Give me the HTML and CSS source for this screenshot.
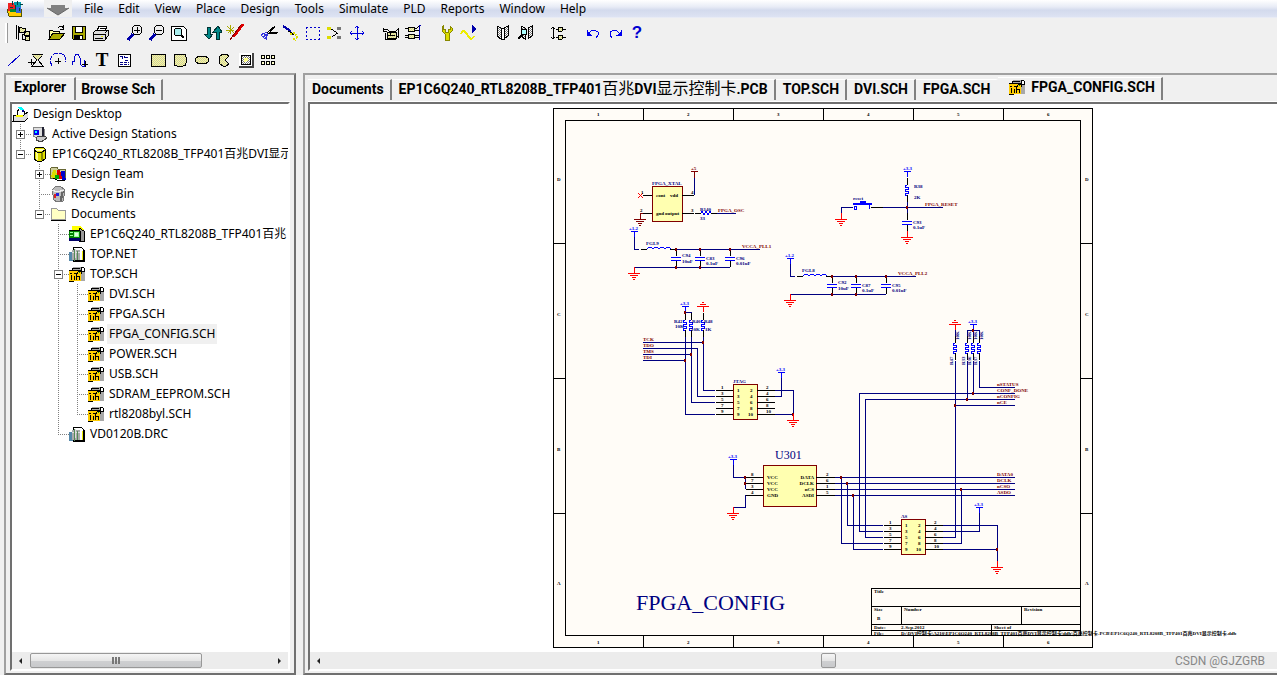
FILE: index.html
```html
<!DOCTYPE html>
<html lang="en">
<head>
<meta charset="utf-8">
<title>Design Explorer - FPGA_CONFIG.SCH</title>
<link rel="stylesheet" href="styles.css">
</head>
<body>
<svg class="defs" aria-hidden="true">
  <defs>
    <pattern id="yl" width="2" height="2" patternUnits="userSpaceOnUse"><rect width="2" height="2" fill="#ffff90"/><path d="M0 0h1v1H0zM1 1h1v1H1z" fill="#c8c8b0"/></pattern>
    <pattern id="gr" width="2" height="2" patternUnits="userSpaceOnUse"><rect width="2" height="2" fill="#fff"/><path d="M0 0h1v1H0zM1 1h1v1H1z" fill="#777"/></pattern>
    <symbol id="i-sch" viewBox="0 0 16 16"><path d="M4 1h8l4 4v10H4z" fill="#a8a8a8"/><path d="M12 1h2l1 1v3h-3z" fill="#fff" stroke="#000"/><path d="M0 4h12v11H0z" fill="#fc0"/><path d="M3 2h8M3 2v3M0 4h12M1 7h2M5 7h2v2M2 9v5M5 10v4M7 14V9l3-4h2v3M8 10h3M10 11v3M0 15h5" stroke="#000" fill="none"/><path d="M10 6h1v1h-1z" fill="#0a0"/></symbol>
    <symbol id="i-net" viewBox="0 0 16 16"><path d="M4 1h8l3 3v11H4z" fill="#fff" stroke="#000"/><path d="M15 4v11H4" stroke="#000" stroke-width="2" fill="none"/><path d="M0 6h4v9H0z" fill="#58a"/><path d="M3 4h8v10H3z" fill="#aaa"/><path d="M3 6h8M6 3v9" stroke="#ddd"/><path d="M5 3v12M8 5v9" stroke="#585"/><path d="M13 5v9" stroke="#ee0"/></symbol>
    <symbol id="i-pcb" viewBox="0 0 16 16"><path d="M3 0h8l4 4v11H3z" fill="#ff0"/><path d="M10 2l5 3v10h-5z" fill="#999" stroke="#000"/><path d="M0 4h11v9H0z" fill="#008000"/><path d="M1 6h3M1 9h3M5 6h4v4H5z" stroke="#9f9" fill="#dfd"/><path d="M0 12h12v3H0z" fill="#006"/><path d="M0 4h11M11 5v10" stroke="#000"/></symbol>
    <symbol id="i-desk" viewBox="0 0 16 16"><path d="M1 9h11l4-3v6l-3 3H1z" fill="#ddd" stroke="#000"/><path d="M5 6l3-4 5 4-1 3H5z" fill="#fff" stroke="#000"/><path d="M5 1h4l3 3H8z" fill="#0ff"/><path d="M4 9h7v2H4z" fill="#ff0"/><path d="M0 15h13l3-3" stroke="#000" fill="none"/><path d="M10 4h2v2h-2z" fill="#008"/></symbol>
    <symbol id="i-station" viewBox="0 0 16 16"><path d="M2 1h7l4 2v9H6l-4-2z" fill="#ddd" stroke="#888"/><path d="M3 4h5v5H3z" fill="#00e"/><path d="M4 5h2v2H4z" fill="#0ff"/><path d="M11 1h2v9h-2z" fill="#223"/><path d="M6 11l8-1 2 2-6 4-5-2z" fill="#ccc" stroke="#444"/></symbol>
    <symbol id="i-db" viewBox="0 0 16 16"><path d="M3 3v10l3 2h5l3-2V3l-2-2H5z" fill="#dd0" stroke="#000"/><path d="M4 3h9v2H4z" fill="#ffffb0"/><path d="M5 6v8M6 6v8" stroke="#ff8"/><path d="M11 6v8" stroke="#880" stroke-width="2"/><path d="M3 4l3 2h5l3-2" fill="none" stroke="#000"/></symbol>
    <symbol id="i-team" viewBox="0 0 16 16"><path d="M0 3l2-2h5l1 2h7v9H0z" fill="#cc9" stroke="#663"/><path d="M3 4h3v3h2v6H3l-2-2z" fill="#dd0"/><path d="M7 4h3l1 4 2 5H7z" fill="#d00"/><path d="M11 5h4v4l1 5h-4z" fill="#00c"/><path d="M5 9h4v4H5z" fill="#0a0"/><path d="M3 12l4 2 8 1" stroke="#000" fill="none"/></symbol>
    <symbol id="i-bin" viewBox="0 0 16 16"><path d="M2 4l3-3 5-1 4 3 1 2-2 10-6 1-3-2z" fill="#bbb" stroke="#777"/><path d="M2 4l5 2 7-2" stroke="#eee" fill="none"/><path d="M11 6l3-1-2 10h-2z" fill="#666"/><path d="M4 8h2v4H4z" fill="#d22"/><path d="M6 7h3v3H6z" fill="#22d"/></symbol>
    <symbol id="i-folder" viewBox="0 0 16 16"><path d="M1 4l1-2h4l2 2h7v9H1z" fill="#ffffc4" stroke="#999"/><path d="M1 14h15V5" stroke="#000" fill="none"/></symbol>
  </defs>
</svg>
<div class="app">
  <nav class="menubar" aria-label="Main menu">
    <svg class="logo" viewBox="0 0 16 16" shape-rendering="crispEdges"><path d="M0 8h14v7H2z" fill="#fc0" stroke="#550"/><path d="M1 2h7v8H1z" fill="#e22"/><path d="M7 1h7v6H8z" fill="#09a"/><path d="M3 8h6v3H3z" fill="#083"/><path d="M9 6h5v6H9z" fill="#36d"/><path d="M5 0v4M10 0v4M13 3h3M3 6h3M8 4v5M12 7v3" stroke="#044"/></svg>
    <button class="dropmark" aria-label="Design menu"><svg viewBox="0 0 24 12"><path d="M5 1h14v3h4l-11 7-11-7h4z" fill="#808080"/><path d="M1 4l11 7 11-7" stroke="#666" fill="none"/></svg></button>
    <button>File</button><button>Edit</button><button>View</button><button>Place</button><button>Design</button><button>Tools</button><button>Simulate</button><button>PLD</button><button>Reports</button><button>Window</button><button>Help</button>
  </nav>
  <div class="toolbar main-tools" role="toolbar" aria-label="Main tools">
    <div class="group"><button aria-label="Explorer"><svg viewBox="0 0 18 18"><path d="M2 1v14M4 2v14M4 6h2M8 10v5h3M8 10h2" stroke="#000"/><path d="M5 3h2l1 1h3v4H5zM10 7h5v4h-5zM11 12h4v4h-4z" fill="url(#yl)" stroke="#000"/></svg></button></div>
    <div class="group">
      <button aria-label="Open"><svg viewBox="0 0 18 18"><path d="M1 15V6h3l1 1h6v2" fill="#ffffa0" stroke="#000"/><path d="M1 15l4-6h12l-5 6z" fill="#aa0" stroke="#000"/><path d="M10 4c2-3 4-2 5 0M15 1v4h-3" stroke="#000"/></svg></button>
      <button aria-label="Save"><svg viewBox="0 0 18 18"><path d="M2 2h13v13H3l-1-1z" fill="#aa0" stroke="#000"/><path d="M5 2h7v6H5z" fill="#fff" stroke="#000"/><path d="M4 11h9v4H4z" fill="#000"/><path d="M10 12h2v3h-2z" fill="#fff"/></svg></button>
      <button aria-label="Print"><svg viewBox="0 0 18 18"><path d="M5 7l2-5h8l-2 5" fill="#fff" stroke="#000"/><path d="M1 9l3-3h12v6l-3 4H1z" fill="#ddd" stroke="#000"/><path d="M1 10h12v6M13 9l3-3M8 4h5M7 6h5M3 14h8" stroke="#000"/><path d="M9 12h2v1H9z" fill="#dd0"/></svg></button>
    </div>
    <div class="group">
      <button aria-label="Zoom in"><svg viewBox="0 0 18 18"><circle cx="11" cy="6" r="5" fill="#eee" stroke="#000"/><path d="M8 6h6M11 3v6" stroke="#000"/><path d="M7 10l-5 6" stroke="#00a" stroke-width="3"/></svg></button>
      <button aria-label="Zoom out"><svg viewBox="0 0 18 18"><circle cx="11" cy="6" r="5" fill="#eee" stroke="#000"/><path d="M8 6h6" stroke="#000"/><path d="M7 10l-5 6" stroke="#00a" stroke-width="3"/></svg></button>
      <button aria-label="Fit document"><svg viewBox="0 0 18 18"><path d="M1 2h12l3 3v11H1z" fill="#fff" stroke="#000"/><circle cx="8" cy="8" r="4" fill="#aee" stroke="#000"/><path d="M11 11l3 3" stroke="#000" stroke-width="2"/></svg></button>
    </div>
    <div class="group">
      <button aria-label="Up or down hierarchy"><svg viewBox="0 0 18 18"><path d="M3 3h3v7h3l-4 5-5-5h3zM12 15h3V8h3l-4-6-5 6h3z" fill="#088" stroke="#033"/></svg></button>
      <button aria-label="Cross probe"><svg viewBox="0 0 18 18"><path d="M17 0L7 13" stroke="#d00" stroke-width="3"/><path d="M15 1L6 13l-2 3" stroke="#800"/><path d="M1 2l7 7M4 1v9M0 6h8M8 3l-6 6" stroke="#aa0"/></svg></button>
    </div>
    <div class="group">
      <button aria-label="Cut"><svg viewBox="0 0 18 18"><path d="M15 2L7 9M15 3L8 10M9 8h9M8 9h9" stroke="#000"/><path d="M7 8l-6 3 4 4 3-6M2 9l6 3M3 13l3-2v5" stroke="#33d" fill="none"/></svg></button>
      <button aria-label="Paste"><svg viewBox="0 0 18 18"><path d="M1 2l6 4 3 4" stroke="#00a" stroke-width="2"/><path d="M6 7l6 3-2 1" stroke="#000"/><path d="M8 10l5-1 2 4-3 2 2 2" stroke="#dd0" stroke-width="2" stroke-dasharray="2 1"/></svg></button>
      <button aria-label="Select area"><svg viewBox="0 0 18 18"><path d="M2 3h13v12H2z" stroke="#00c" stroke-dasharray="2 2"/></svg></button>
      <button aria-label="Deselect"><svg viewBox="0 0 18 18"><path d="M5 5l7 4-7 4" stroke="#000" stroke-dasharray="3 1"/><path d="M1 3h4v3H1zM1 12h4v3H1z" fill="#dd0"/><path d="M11 3h4v3h-4zM11 12h4v3h-4z" fill="#777"/></svg></button>
      <button aria-label="Move"><svg viewBox="0 0 18 18"><path d="M9 2v14M2 9h14M7 4l2-2 2 2M7 14l2 2 2-2M4 7L2 9l2 2M14 7l2 2-2 2" stroke="#00d"/></svg></button>
    </div>
    <div class="group">
      <button aria-label="Wiring"><svg viewBox="0 0 18 18"><path d="M5 8h9v6H5z" fill="url(#yl)" stroke="#000"/><path d="M2 5h3l2 2h7l2-2v8l-2-2M1 4v3h4M3 9v6h11M5 11h8M8 8v3" stroke="#000"/></svg></button>
      <button aria-label="Part browser"><svg viewBox="0 0 18 18"><path d="M4 3h6v4H4zM4 10h6v4H4z" fill="url(#yl)" stroke="#000"/><path d="M1 4h3M1 11h3M10 4h3l2-2M10 11h5M1 13h3M10 13h5M10 6h5" stroke="#000"/><path d="M15 2v14M15 2l2-1" stroke="#00a"/></svg></button>
    </div>
    <div class="group">
      <button aria-label="Electrical rules"><svg viewBox="0 0 18 18"><path d="M5 2v3h2v3h3V5h2V2l2 2v3l-3 3v6H7v-6L4 7V3z" fill="#dd0" stroke="#880"/></svg></button>
      <button aria-label="Simulate"><svg viewBox="0 0 18 18"><path d="M1 10c2-5 4-3 6 0s4 8 7 2" stroke="#ee0" stroke-width="2"/><path d="M12 1l5 4-5 4z" fill="#00a"/></svg></button>
    </div>
    <div class="group">
      <button aria-label="Place part"><svg viewBox="0 0 18 18"><path d="M3 2l4 2v11l-4-3zM14 2l-4 2v11l4-3z" fill="url(#gr)" stroke="#000"/><path d="M7 4h3v11H7z" fill="#fff" stroke="#000"/></svg></button>
      <button aria-label="Find part"><svg viewBox="0 0 18 18"><path d="M5 2l4 2v11l-4-3zM16 2l-4 2v11l4-3z" fill="url(#gr)" stroke="#000"/><circle cx="8" cy="8" r="3" fill="#aff" stroke="#000"/><path d="M6 11l-4 4" stroke="#000" stroke-width="2"/></svg></button>
    </div>
    <div class="group"><button aria-label="Annotate"><svg viewBox="0 0 18 18"><path d="M3 3v12M1 5l2-2 2 2M1 13l2 2 2-2M6 5h3M6 13h3M13 5h3M13 13h3" stroke="#000"/><path d="M8 3h4l1 2-1 2H8zM8 11h4l1 2-1 2H8z" fill="url(#yl)" stroke="#000"/></svg></button></div>
    <div class="group">
      <button aria-label="Undo"><svg viewBox="0 0 18 18"><path d="M3 6v5h5M3 11l4-4 3-1 4 2v3l-2 3" stroke="#00e"/><path d="M3 7l4 4H3z" fill="#00e"/></svg></button>
      <button aria-label="Redo"><svg viewBox="0 0 18 18"><path d="M15 6v5h-5M15 11l-4-4-3-1-4 2v3l2 3" stroke="#00e"/><path d="M15 7l-4 4h4z" fill="#00e"/></svg></button>
      <button class="help" aria-label="Help">?</button>
    </div>
  </div>
  <div class="toolbar draw-tools" role="toolbar" aria-label="Drawing tools">
    <div class="group">
      <button aria-label="Line"><svg viewBox="0 0 18 18"><path d="M3 15L15 4" stroke="#00c"/></svg></button>
      <button aria-label="Polygon"><svg viewBox="0 0 18 18"><path d="M5 3h11l-5 6 5 6H5l5-6z" fill="#f0f0f0" stroke="#000"/><path d="M6 4h9l-4 5h-1z" fill="url(#yl)"/><path d="M1 11h6M4 8v6" stroke="#000"/></svg></button>
      <button aria-label="Arc"><svg viewBox="0 0 18 18"><path d="M3 15C-1 7 4 2 9 2s9 4 7 9" stroke="#00c" stroke-dasharray="5 1"/><path d="M9 7v6M6 10h6" stroke="#000"/></svg></button>
      <button aria-label="Curve"><svg viewBox="0 0 18 18"><path d="M1 14V10h2V7l2-4h2l2 4v6l2 2h2V9" stroke="#00c"/><path d="M14 10v6M11 13h6" stroke="#000"/></svg></button>
      <button class="text-tool" aria-label="Text">T</button>
      <button aria-label="Text frame"><svg viewBox="0 0 18 18"><path d="M3 3h12v12H3z" fill="#fff" stroke="#000"/><path d="M5 5h4v2M7 5v4M10 6h4M10 9h4M5 11h9M5 13h9" stroke="#008" stroke-dasharray="3 1"/></svg></button>
    </div>
    <div class="group">
      <button aria-label="Rectangle"><svg viewBox="0 0 18 18"><path d="M2 3h14v12H2z" fill="url(#yl)" stroke="#000"/></svg></button>
      <button aria-label="Rounded rectangle"><svg viewBox="0 0 18 18"><rect x="3" y="3" width="12" height="12" rx="3" fill="url(#yl)" stroke="#000"/></svg></button>
      <button aria-label="Ellipse"><svg viewBox="0 0 18 18"><ellipse cx="9" cy="9" rx="7" ry="4" fill="url(#yl)" stroke="#000"/></svg></button>
      <button aria-label="Pie"><svg viewBox="0 0 18 18"><path d="M14 5l-3-2H8L5 5 4 9l1 4 3 2h3l3-2-4-4z" fill="url(#yl)" stroke="#000"/></svg></button>
      <button aria-label="Picture"><svg viewBox="0 0 18 18"><path d="M2 2h14v14H2z" fill="#fff"/><path d="M16 2v14H2" stroke="#444" stroke-width="2"/><path d="M4 4h9v9H4z" fill="url(#gr)" stroke="#000"/><path d="M7 7h4v3H9v1H7z" fill="#ff8"/></svg></button>
      <button aria-label="Array"><svg viewBox="0 0 18 18"><path d="M2 4h3v3H2zM7 4h3v3H7zM12 4h3v3h-3zM2 10h3v3H2zM7 10h3v3H7zM12 10h3v3h-3z" fill="#ffc" stroke="#000"/></svg></button>
    </div>
  </div>
  <main class="workspace">
    <section class="panel explorer">
      <div class="tabs" role="tablist"><button class="tab active" role="tab" aria-selected="true">Explorer</button><button class="tab" role="tab">Browse Sch</button></div>
      <div class="well">
        <div class="tree">
          <div class="row root"><svg><use href="#i-desk"/></svg><span>Design Desktop</span></div>
          <ul>
            <li><div class="row"><button class="exp plus" aria-label="Expand"></button><svg><use href="#i-station"/></svg><span>Active Design Stations</span></div></li>
            <li><div class="row"><button class="exp" aria-label="Collapse"></button><svg><use href="#i-db"/></svg><span>EP1C6Q240_RTL8208B_TFP401百兆DVI显示</span></div>
              <ul>
                <li><div class="row"><button class="exp plus" aria-label="Expand"></button><svg><use href="#i-team"/></svg><span>Design Team</span></div></li>
                <li><div class="row"><svg><use href="#i-bin"/></svg><span>Recycle Bin</span></div></li>
                <li><div class="row"><button class="exp" aria-label="Collapse"></button><svg><use href="#i-folder"/></svg><span>Documents</span></div>
                  <ul>
                    <li><div class="row"><svg><use href="#i-pcb"/></svg><span>EP1C6Q240_RTL8208B_TFP401百兆</span></div></li>
                    <li><div class="row"><svg><use href="#i-net"/></svg><span>TOP.NET</span></div></li>
                    <li><div class="row"><button class="exp" aria-label="Collapse"></button><svg><use href="#i-sch"/></svg><span>TOP.SCH</span></div>
                      <ul>
                        <li><div class="row"><svg><use href="#i-sch"/></svg><span>DVI.SCH</span></div></li>
                        <li><div class="row"><svg><use href="#i-sch"/></svg><span>FPGA.SCH</span></div></li>
                        <li><div class="row"><svg><use href="#i-sch"/></svg><span class="selected">FPGA_CONFIG.SCH</span></div></li>
                        <li><div class="row"><svg><use href="#i-sch"/></svg><span>POWER.SCH</span></div></li>
                        <li><div class="row"><svg><use href="#i-sch"/></svg><span>USB.SCH</span></div></li>
                        <li><div class="row"><svg><use href="#i-sch"/></svg><span>SDRAM_EEPROM.SCH</span></div></li>
                        <li><div class="row"><svg><use href="#i-sch"/></svg><span>rtl8208byl.SCH</span></div></li>
                      </ul>
                    </li>
                    <li><div class="row"><svg><use href="#i-net"/></svg><span>VD0120B.DRC</span></div></li>
                  </ul>
                </li>
              </ul>
            </li>
          </ul>
        </div>
        <div class="scroll"><button class="arrow left" aria-label="Scroll left"></button><div class="track"><div class="thumb wide"><i></i><i></i><i></i></div></div><button class="arrow right" aria-label="Scroll right"></button></div>
      </div>
    </section>
    <section class="panel editor">
      <div class="tabs" role="tablist">
        <button class="tab" role="tab">Documents</button><button class="tab" role="tab">EP1C6Q240_RTL8208B_TFP401<span class="cjk">百兆</span>DVI<span class="cjk">显示控制卡</span>.PCB</button><button class="tab" role="tab">TOP.SCH</button><button class="tab" role="tab">DVI.SCH</button><button class="tab open-end" role="tab">FPGA.SCH</button><button class="tab active" role="tab" aria-selected="true"><svg><use href="#i-sch"/></svg>FPGA_CONFIG.SCH</button>
      </div>
      <div class="well">
        <div class="canvas">
          <svg class="sheet" width="967" height="548" viewBox="310 104 967 548">
            <defs>
              <g id="gnd"><path d="M0 -6V0M-6 0H6M-4 2H4M-2 4H2M-1 6H1"/></g>
              <g id="gndup"><path d="M0 6V0M-6 0H6M-3 -2H3M-1 -4H1"/></g>
              <g id="pwr"><path class="b" d="M-3 0H4M0 0V6"/></g>
              <g id="res"><path class="k" d="M0 0V7M0 17V24"/><path class="b" d="M0 7h-2v2h3v2h-3v2h3v2h-3v2h2"/></g>
              <g id="cap"><path class="k" d="M0 0V7M0 12V18"/><path class="b" d="M-5 8H5M-5 11H5"/></g>
              <path id="dot" class="dot" d="M-1 -1h2v3h-2z"/>
              <g id="filter">
                <use href="#pwr" x="634" y="231"/><path class="n" d="M634 237V249H639M676 249H760M634 267H730"/><path class="k" d="M641 249H647M670 249H676"/>
                <path class="b" d="M647 249l2-2h2l2 2l2-2h2l2 2l2-2h2l2 2l2-2h2l2 2"/>
                <use href="#cap" x="676" y="249"/><use href="#cap" x="700" y="249"/><use href="#cap" x="730" y="249"/>
                <use class="r" href="#gnd" x="634" y="273"/>
                <use href="#dot" x="676" y="249"/><use href="#dot" x="700" y="249"/><use href="#dot" x="730" y="249"/><use href="#dot" x="676" y="267"/><use href="#dot" x="700" y="267"/>
              </g>
              <g id="pins"><rect class="part" x="0" y="-6" width="24" height="35"/><path class="k" d="M-17 0H0M-17 6H0M-17 12H0M-17 18H0M-17 24H0M24 0H42M24 6H42M24 12H42M24 18H42M24 24H42"/>
                <g class="tk"><text x="-12" y="-1">1</text><text x="-12" y="5">3</text><text x="-12" y="11">5</text><text x="-12" y="17">7</text><text x="-12" y="23">9</text><text x="4" y="2">1</text><text x="4" y="8">3</text><text x="4" y="14">5</text><text x="4" y="20">7</text><text x="4" y="26">9</text><text x="17" y="2">2</text><text x="17" y="8">4</text><text x="17" y="14">6</text><text x="17" y="20">8</text><text x="15" y="26">10</text><text x="33" y="-1">2</text><text x="33" y="5">4</text><text x="33" y="11">6</text><text x="33" y="17">8</text><text x="33" y="23">10</text></g></g>
            </defs>
            <g class="wires">
              <rect class="paper" x="553" y="108" width="539" height="539"/><rect class="k" x="565" y="120" width="515" height="515"/>
              <path class="k" d="M643 108v12M733 108v12M823 108v12M913 108v12M1003 108v12M643 635v12M733 635v12M823 635v12M913 635v12M1003 635v12M553 243h12M553 378h12M553 513h12M1080 243h12M1080 378h12M1080 513h12"/>
              <path class="k" d="M871 635V588H1080M871 606H1080M871 624H1080M871 630H1080M901 606V624M1021 606V624M991 624V635"/>
              <!-- crystal -->
              <rect class="part" x="652" y="186" width="30" height="35"/>
              <path class="k" d="M643 195H652M643 213H652M682 195H694M682 213H694M695 213H701M711 213H717"/>
              <path class="n" d="M694 195V178M717 213H736"/><path class="d" d="M694 178V171M691 171H698M643 213H640"/><use class="d" href="#gnd" x="640" y="219"/>
              <path class="r" d="M638 193L643 198M643 193L638 198"/><path class="b" d="M701 213l1-2 2 4 2-4 2 4 2-4 1 2"/>
              <use href="#filter"/><use href="#filter" x="156" y="27"/>
              <!-- reset -->
              <use class="r" href="#gnd" x="841" y="219"/><path class="n" d="M841 213V207H853M883 207H943M907 202V214"/><path class="k" d="M871 207H883"/>
              <path class="solid" d="M853 203h19v2h-19zM860 201h6v2h-6z"/><path class="b" d="M854 206h2v3h-2zM869 205v4"/>
              <use href="#pwr" x="907" y="171"/><use href="#res" x="907" y="178"/><use href="#cap" x="907" y="213"/><use class="r" href="#gnd" x="907" y="237"/><use href="#dot" x="907" y="207"/>
              <!-- JTAG -->
              <use href="#pwr" x="685" y="306"/><path class="n" d="M685 312H691V318M685 337V414H715M691 337V402H715M703 337V390H715M643 342H703M643 348H697V396H715M643 354H691M643 360H685"/>
              <use href="#res" x="685" y="313"/><use href="#res" x="691" y="313"/><use href="#res" x="703" y="313"/><use class="r" href="#gndup" x="703" y="306"/>
              <use href="#dot" x="685" y="312"/><use href="#dot" x="703" y="342"/><use href="#dot" x="691" y="354"/><use href="#dot" x="685" y="360"/>
              <use href="#pins" x="733" y="390"/><path class="n" d="M775 390H793V414M775 396H781V378M775 414H793"/><use href="#pwr" x="781" y="372"/><use href="#dot" x="793" y="414"/><use class="r" href="#gnd" x="793" y="420"/>
              <!-- pull-ups -->
              <use class="r" href="#gndup" x="955" y="324"/><use href="#pwr" x="973" y="324"/>
              <path class="n" d="M955 330V336M967 336V330H979V336M973 330V336M955 361V537H943M967 361V399M973 361V393M979 361V387H1015M859 531V393H1015M865 537V399H1015M955 405H1015M859 531H883M865 537H883"/>
              <use href="#res" x="955" y="336"/><use href="#res" x="967" y="336"/><use href="#res" x="973" y="336"/><use href="#res" x="979" y="336"/>
              <use href="#dot" x="973" y="330"/><use href="#dot" x="973" y="393"/><use href="#dot" x="967" y="399"/><use href="#dot" x="955" y="405"/>
              <!-- U301 -->
              <rect class="part" x="763" y="465" width="53" height="41"/><use href="#pwr" x="733" y="459"/>
              <path class="k" d="M746 477H763M746 483H763M746 489H763M746 495H763M816 477H835M816 483H835M816 489H835M816 495H835"/>
              <path class="n" d="M733 465V477H745V489M746 495H745V507H733M835 477H1015M835 483H1015M835 489H1015M835 495H1015M841 477V543H883M847 483V525H883M853 495V549H883M961 489V543H943M943 525H997V561M943 531H979V513M943 549H997"/>
              <use class="r" href="#gnd" x="733" y="513"/><use href="#pwr" x="979" y="507"/><use class="r" href="#gnd" x="997" y="567"/><use href="#pins" x="901" y="525"/>
              <use href="#dot" x="745" y="477"/><use href="#dot" x="745" y="483"/><use href="#dot" x="841" y="477"/><use href="#dot" x="847" y="483"/><use href="#dot" x="853" y="495"/><use href="#dot" x="961" y="489"/><use href="#dot" x="997" y="549"/>
            </g>
            <g class="tk">
              <text x="597" y="116">1</text><text x="687" y="116">2</text><text x="777" y="116">3</text><text x="867" y="116">4</text><text x="957" y="116">5</text><text x="1047" y="116">6</text>
              <text x="597" y="644">1</text><text x="687" y="644">2</text><text x="777" y="644">3</text><text x="867" y="644">4</text><text x="957" y="644">5</text><text x="1047" y="644">6</text>
              <text x="557" y="181">D</text><text x="557" y="316">C</text><text x="557" y="451">B</text><text x="557" y="585">A</text><text x="1085" y="181">D</text><text x="1085" y="316">C</text><text x="1085" y="451">B</text><text x="1085" y="585">A</text>
              <text x="641" y="194">1</text><text x="640" y="212">2</text><text x="691" y="194">4</text><text x="691" y="212">3</text><text x="656" y="197">cont</text><text x="670" y="197">vdd</text><text x="656" y="215">gnd</text><text x="665" y="215">output</text>
              <text x="751" y="476">8</text><text x="751" y="482">7</text><text x="751" y="488">3</text><text x="751" y="494">4</text><text x="826" y="476">2</text><text x="826" y="482">6</text><text x="826" y="488">1</text><text x="826" y="494">5</text>
              <text x="767" y="479">VCC</text><text x="767" y="485">VCC</text><text x="767" y="491">VCC</text><text x="767" y="497">GND</text>
              <g text-anchor="end"><text x="814" y="479">DATA</text><text x="814" y="485">DCLK</text><text x="814" y="491">nCS</text><text x="814" y="497">ASDI</text></g>
              <text x="874" y="593">Title</text><text x="874" y="611">Size</text><text x="877" y="620">B</text><text x="904" y="611">Number</text><text x="1024" y="611">Revision</text><text x="874" y="629">Date:</text><text x="901" y="629">2-Sep-2012</text><text x="994" y="629">Sheet  of</text><text x="874" y="635">File:</text><text x="901" y="635">D:\DVI控制卡\A210\EP1C6Q240_RTL8208B_TFP401百兆DVI显示控制卡\ddb\百兆控制卡-PCB\EP1C6Q240_RTL8208B_TFP401百兆DVI显示控制卡.ddb</text>
            </g>
            <g class="tn">
              <text x="652" y="185">FPGA_XTAL</text><text x="700" y="211">R140</text><text x="700" y="220">33</text>
              <text x="646" y="245">FGL9</text><text x="682" y="257">C94</text><text x="682" y="263">10uF</text><text x="706" y="260">C83</text><text x="706" y="265">0.1uF</text><text x="736" y="260">C96</text><text x="736" y="265">0.01uF</text>
              <text x="802" y="272">FGL8</text><text x="838" y="284">C92</text><text x="838" y="290">10uF</text><text x="862" y="287">C87</text><text x="862" y="292">0.1uF</text><text x="892" y="287">C95</text><text x="892" y="292">0.01uF</text>
              <text x="853" y="200">reset</text><text x="914" y="188">R38</text><text x="914" y="199">2K</text><text x="913" y="224">C93</text><text x="913" y="229">0.1uF</text>
              <text x="674" y="323">R42</text><text x="675" y="328">10K</text><text x="692" y="323">R40</text><text x="691" y="331">10K</text><text x="704" y="323">R48</text><text x="705" y="331">1K</text><text x="733" y="383">JTAG</text><text x="901" y="518">AS</text>
              <text transform="translate(959 340) rotate(-90)">10K</text><text transform="translate(971 340) rotate(-90)">10K</text><text transform="translate(977 340) rotate(-90)">10K</text><text transform="translate(983 340) rotate(-90)">10K</text>
              <text transform="translate(953 365) rotate(-90)">R47</text><text transform="translate(965 365) rotate(-90)">R33</text><text transform="translate(971 365) rotate(-90)">R36</text><text transform="translate(977 365) rotate(-90)">R37</text>
            </g>
            <g class="tb"><text x="629" y="230">+1.2</text><text x="785" y="257">+1.2</text><text x="903" y="170">+3.3</text><text x="680" y="305">+3.3</text><text x="776" y="371">+3.3</text><text x="968" y="323">+3.3</text><text x="728" y="458">+3.3</text><text x="974" y="506">+3.3</text></g>
            <g class="td"><text x="691" y="170">+5</text><text x="718" y="212">FPGA_OSC</text><text x="742" y="248">VCCA_PLL1</text><text x="898" y="275">VCCA_PLL2</text><text x="925" y="206">FPGA_RESET</text>
              <text x="643" y="341">TCK</text><text x="643" y="347">TDO</text><text x="643" y="353">TMS</text><text x="643" y="359">TDI</text>
              <text x="997" y="386">nSTATUS</text><text x="997" y="392">CONF_DONE</text><text x="997" y="398">nCONFIG</text><text x="997" y="404">nCE</text><text x="997" y="476">DATA0</text><text x="997" y="482">DCLK</text><text x="997" y="488">nCSO</text><text x="997" y="494">ASDO</text></g>
            <text class="name" x="775" y="459">U301</text><text class="title" x="636" y="610">FPGA_CONFIG</text>
          </svg>
        </div>
        <div class="scroll"><button class="arrow left" aria-label="Scroll left"></button><div class="track"><div class="thumb small"></div></div></div>
      </div>
      <p class="mark">CSDN @GJZGRB</p>
    </section>
  </main>
</div>
</body>
</html>
```
FILE: styles.css
```css
* { box-sizing: border-box; }
body { margin: 0; background: #f0f0f0; color: #000; font-family: "Noto Sans", "Noto Sans CJK SC", sans-serif; }
button { border: 0; padding: 0; background: none; color: inherit; font: inherit; }
.defs { position: absolute; width: 0; height: 0; }
.app { display: flex; flex-direction: column; height: 100vh; overflow: hidden; }

.menubar { display: flex; align-items: center; height: 18px; flex: none; padding-left: 7px; border-bottom: 1px solid #e8ebf5; background: linear-gradient(#fff, #e8ecf6 40%, #d3daed 60%, #dde3f3); font-size: 12px; line-height: 16px; }
.menubar button { padding: 0 7px 0 8px; }
.logo { width: 16px; height: 16px; flex: none; }
.menubar .dropmark { width: 28px; height: 17px; margin: 0 4px 0 21px; padding: 2px 2px 0; background: #f0f0f0; }
.dropmark svg { display: block; width: 24px; height: 12px; }

.toolbar { display: flex; gap: 12px; flex: none; height: 26px; align-items: center; }
.main-tools { height: 30px; padding-left: 6px; margin-left: 5px; }
.main-tools::before { content: ""; width: 2px; height: 20px; margin: 0 -12px 0 -6px; border-right: 1px solid #999; background: #fff; }
.main-tools .group:first-of-type { margin-left: 4px; }
.draw-tools { height: 23px; padding-left: 3px; margin-bottom: 2px; }
.group { display: flex; }
.toolbar button { display: flex; align-items: center; justify-content: center; width: 22px; height: 22px; }
.toolbar svg { width: 18px; height: 18px; fill: none; shape-rendering: crispEdges; }
.toolbar .help { color: #0000d0; font: bold 17px "Liberation Sans", sans-serif; }
.toolbar .text-tool { font: bold 19px "Liberation Serif", serif; }

.workspace { display: flex; flex: 1; min-height: 0; gap: 7px; padding-left: 4px; }
.panel { position: relative; display: flex; flex-direction: column; min-width: 0; padding: 2px 4px 2px 5px; border: 2px solid; border-color: #a0a0a0 #707070 #707070 #a0a0a0; background: #f0f0f0; }
.explorer { flex: 0 0 292px; }
.editor { flex: 1; padding-left: 3px; border-right: 0; padding-right: 0; }
.tabs { display: flex; flex: none; height: 25px; align-items: flex-start; overflow: hidden; border-bottom: 1px solid #fff; }
.tab { display: flex; align-items: center; flex: none; height: 21px; margin-top: 2px; padding: 0 6px 2px 7px; border-right: 2px solid #808080; border-top: 1px solid #fff; font: bold 14px/18px Roboto, "Noto Sans CJK SC", sans-serif; }
.tab.active { height: 23px; margin-top: 0; padding-bottom: 4px; }
.explorer .tab { padding-left: 5px; }
.explorer .tab:first-child { padding: 0 8px 4px 3px; }
.editor .tab:first-child { padding-left: 4px; }
.tab.open-end { border-right-color: #f0f0f0; }
.tab svg { width: 16px; height: 16px; margin: 0 6px 0 4px; shape-rendering: crispEdges; }
.tab .cjk { font-size: 16px; font-weight: normal; }
.well { display: flex; flex: 1; flex-direction: column; min-height: 0; border: 2px solid; border-color: #707070 #fff #fff #707070; background: #fff; }
.explorer .well { margin-left: -1px; }
.editor .well { border-right: 0; }

.tree { flex: 1; min-height: 0; overflow: hidden; font-size: 12px; line-height: 20px; white-space: nowrap; }
.tree ul { margin: 0; padding: 0; list-style: none; }
.tree ul ul { padding-left: 19px; }
.tree li { background: repeating-linear-gradient(#808080 0 1px, transparent 1px 2px) 8px 0 / 1px 100% no-repeat; }
.tree li:last-child { background-size: 1px 10px; }
.row { display: flex; align-items: center; height: 20px; padding-left: 19px; background: repeating-linear-gradient(90deg, #808080 0 1px, transparent 1px 2px) 8px 10px / 11px 1px no-repeat; }
.row.root { padding-left: 0; background: none; }
.row svg { flex: none; width: 16px; height: 16px; margin-right: 3px; shape-rendering: crispEdges; }
.row span { padding: 0 2px; }
.row .selected { background: #f0f0f0; }
.exp { flex: none; width: 9px; height: 9px; margin: 0 6px 0 -15px; border: 1px solid #808080; background: linear-gradient(#000, #000) center / 5px 1px no-repeat, #fff; }
.exp.plus { background: linear-gradient(#000, #000) center / 5px 1px no-repeat, linear-gradient(#000, #000) center / 1px 5px no-repeat, #fff; }

.scroll { display: flex; flex: none; align-items: center; height: 17px; background: #ececec; }
.arrow { display: flex; align-items: center; justify-content: center; width: 17px; height: 15px; }
.arrow::before { content: ""; border: 3px solid transparent; }
.arrow.left::before { border-left-width: 0; border-right-color: #222; }
.arrow.right::before { border-right-width: 0; border-left-color: #222; }
.track { flex: 1; height: 15px; }
.thumb { display: flex; align-items: center; justify-content: center; gap: 1px; height: 15px; border: 1px solid #989898; border-radius: 2px; background: linear-gradient(#f5f5f5, #e6e6e6 50%, #cfd0d2 51%, #c8c9cb); }
.thumb.wide { width: 71%; margin-left: 1px; }
.thumb.small { width: 15px; margin-left: 52%; }
.thumb i { width: 2px; height: 7px; background: #777; }
.canvas { display: flex; flex: 1; min-height: 0; overflow: hidden; }
.sheet { flex: none; margin: 0 auto; }
.mark { position: absolute; right: 12px; bottom: 4px; margin: 0; color: #888; font: 12px/16px Roboto, sans-serif; }

.wires { fill: none; shape-rendering: crispEdges; }
.paper { fill: #fffcf7; stroke: #000; }
.part { fill: #ffffb0; stroke: #800000; }
.k { stroke: #000; }
.n { stroke: #000080; }
.b { stroke: #0000ff; }
.r { stroke: #ff0000; }
.d { stroke: #800000; }
.dot { fill: #800000; }
.solid { fill: #0000ff; }
.tk, .tn, .tb, .td { font: 5px "Liberation Serif", "Noto Sans CJK SC", serif; stroke: none; }
.tk { fill: #000; font-weight: bold; }
.tn { fill: #000080; font-weight: bold; }
.tb { fill: #0000ff; font-weight: bold; }
.td { fill: #800000; font-weight: bold; }
.name { fill: #000080; font: 12px "Liberation Serif", serif; }
.title { fill: #000080; font: 22px "Liberation Serif", serif; }
```
